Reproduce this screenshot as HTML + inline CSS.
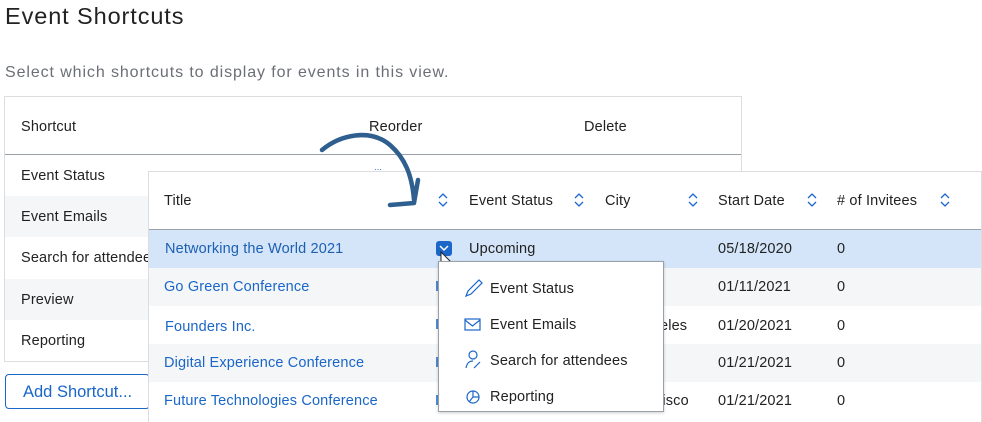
<!DOCTYPE html>
<html style="width:982px;height:422px;overflow:hidden"><head><style>
*{box-sizing:border-box}
body{margin:0;width:982px;height:422px;overflow:hidden;background:#fff;font-family:"Liberation Sans",sans-serif;color:#222;position:relative}
.a{position:absolute;white-space:nowrap}
.t{font-size:14.5px;margin-top:2px;letter-spacing:.15px}
.lk{color:#1a66c9;font-size:14.5px;margin-top:2px;letter-spacing:.15px}
</style></head><body>
<div class="a" style="left:5px;top:3px;font-size:23.5px;letter-spacing:.9px;color:#222">Event Shortcuts</div>
<div class="a" style="left:5px;top:64px;font-size:16px;letter-spacing:.9px;color:#6b6f75">Select which shortcuts to display for events in this view.</div>

<div class="a" style="left:4px;top:96px;width:738px;height:266px;border:1px solid #dcdde0"></div>
<div class="a" style="left:5px;top:154px;width:736px;height:1px;background:#9aa0a8"></div>
<div class="a" style="left:5px;top:196px;width:736px;height:41px;background:#f5f6f8"></div>
<div class="a" style="left:5px;top:279px;width:736px;height:41px;background:#f5f6f8"></div>
<div class="a t" style="left:21px;top:117px">Shortcut</div>
<div class="a t" style="left:369px;top:117px">Reorder</div>
<div class="a t" style="left:584px;top:117px">Delete</div>
<div class="a t" style="left:21px;top:166px">Event Status</div>
<div class="a t" style="left:21px;top:207px">Event Emails</div>
<div class="a t" style="left:21px;top:248px">Search for attendees</div>
<div class="a t" style="left:21px;top:290px">Preview</div>
<div class="a t" style="left:21px;top:331px">Reporting</div>
<div class="a" style="left:5px;top:374px;width:145px;height:35px;border:1px solid #1a66c9;border-radius:4px;color:#1a66c9;font-size:16.5px;padding:8px 0 0 17px">Add Shortcut...</div>

<div class="a" style="left:148px;top:171px;width:834px;height:251px;background:#fff;border:1px solid #dcdde0;border-bottom:none"></div>
<div class="a" style="left:149px;top:229px;width:832px;height:1px;background:#9aa0a8"></div>
<div class="a" style="left:149px;top:230px;width:832px;height:38px;background:#d4e5f9"></div>
<div class="a" style="left:149px;top:268px;width:832px;height:38px;background:#f5f6f8"></div>
<div class="a" style="left:149px;top:344px;width:832px;height:38px;background:#f5f6f8"></div>
<div class="a t" style="left:164px;top:191px">Title</div>
<div class="a t" style="left:469px;top:191px">Event Status</div>
<div class="a t" style="left:605px;top:191px">City</div>
<div class="a t" style="left:718px;top:191px">Start Date</div>
<div class="a t" style="left:837px;top:191px">#&nbsp;of Invitees</div>
<svg class="a" style="left:0;top:0" width="982" height="422">
<g fill="none" stroke="#1a66c9" stroke-width="1.3">
<path d="M439 198l4-4 4 4M439 202l4 4 4-4"/>
<path d="M575 198l4-4 4 4M575 202l4 4 4-4"/>
<path d="M689 198l4-4 4 4M689 202l4 4 4-4"/>
<path d="M808 198l4-4 4 4M808 202l4 4 4-4"/>
<path d="M941 198l4-4 4 4M941 202l4 4 4-4"/>
</g>
<g fill="none" stroke="#1a66c9" stroke-width="1.5">
<path d="M437 281v10M437 319v10M437 357v10M437 395v10"/>
</g>
<path d="M322 150 C340 135 370 128 390 145 C405 158 412 175 414 200 M390 205 L414 203 L418 180" fill="none" stroke="#2f5f8f" stroke-width="4.5" stroke-linecap="round" stroke-linejoin="round"/>
<text x="374" y="172" font-size="8" fill="#1a66c9">⋯</text>
<rect x="436" y="241" width="16" height="15" rx="3" fill="#1a66c9"/>
<path d="M440 246l4 4 4-4" fill="none" stroke="#fff" stroke-width="1.5"/>
<path d="M441 252v16l4-4 3 6 2-1-3-6h5z" fill="#fff" stroke="#222" stroke-width="1"/>
</svg>
<div class="a lk" style="left:165px;top:239px;color:#1c5fb3">Networking the World 2021</div>
<div class="a t" style="left:469px;top:239px">Upcoming</div>
<div class="a t" style="left:718px;top:239px">05/18/2020</div>
<div class="a t" style="left:837px;top:239px">0</div>
<div class="a lk" style="left:164px;top:277px">Go Green Conference</div>
<div class="a t" style="left:718px;top:277px">01/11/2021</div>
<div class="a t" style="left:837px;top:277px">0</div>
<div class="a lk" style="left:165px;top:317px">Founders Inc.</div>
<div class="a t" style="left:660px;top:316px">eles</div>
<div class="a t" style="left:718px;top:316px">01/20/2021</div>
<div class="a t" style="left:837px;top:316px">0</div>
<div class="a lk" style="left:164px;top:353px">Digital Experience Conference</div>
<div class="a t" style="left:718px;top:353px">01/21/2021</div>
<div class="a t" style="left:837px;top:353px">0</div>
<div class="a lk" style="left:164px;top:391px">Future Technologies Conference</div>
<div class="a t" style="left:655px;top:391px">cisco</div>
<div class="a t" style="left:718px;top:391px">01/21/2021</div>
<div class="a t" style="left:837px;top:391px">0</div>

<div class="a" style="left:438px;top:261px;width:226px;height:151px;background:#fff;border:1px solid #9aa0a8;box-shadow:0 1px 3px rgba(0,0,0,.2)"></div>
<svg class="a" style="left:0;top:0" width="982" height="422">
<g fill="none" stroke="#1a66c9" stroke-width="1.2">
<path d="M466 296l2-5 11-11 3 3-11 11z"/>
<rect x="465" y="319" width="15" height="11"/><path d="M465 320l7.5 6 7.5-6"/>
<circle cx="473" cy="355" r="4"/><path d="M466 368c1-5 3-7 7-7M474 368l6-6"/>
<circle cx="473" cy="397" r="6"/><path d="M473 391v6h6M473 397l-4 5"/>
</g>
</svg>
<div class="a t" style="left:490px;top:279px">Event Status</div>
<div class="a t" style="left:490px;top:315px">Event Emails</div>
<div class="a t" style="left:490px;top:351px">Search for attendees</div>
<div class="a t" style="left:490px;top:387px">Reporting</div>
</body></html>
